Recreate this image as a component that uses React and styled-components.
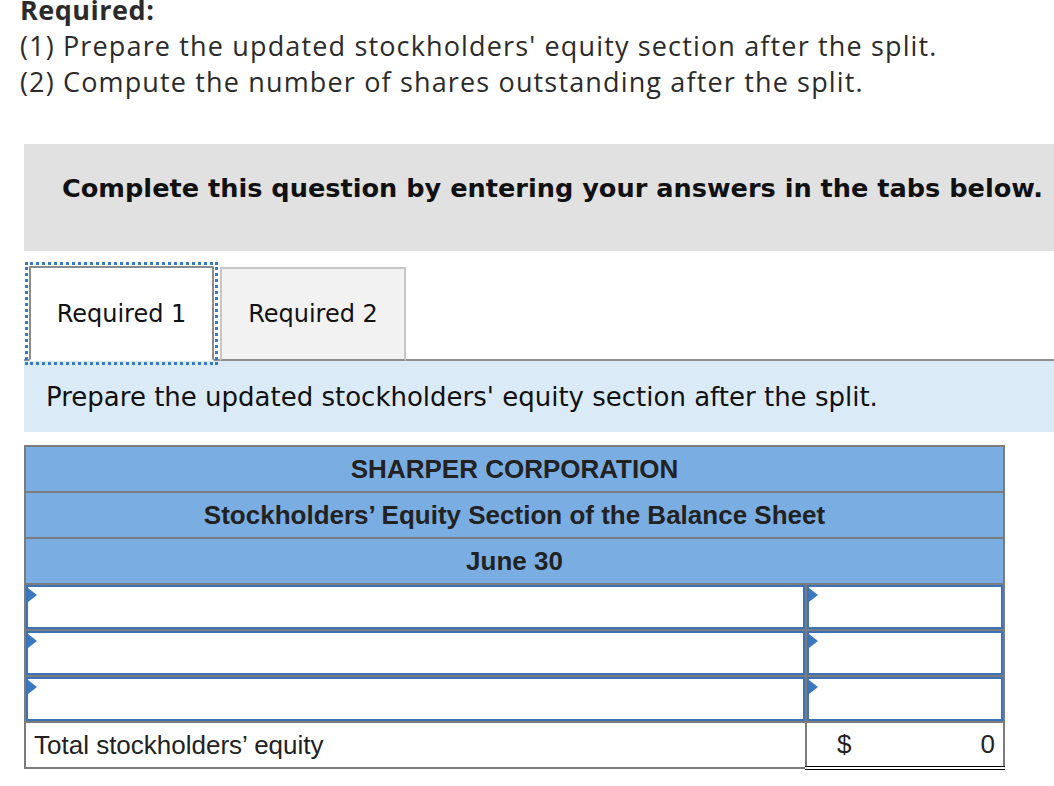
import styled, { createGlobalStyle } from 'styled-components';

const GlobalStyle = createGlobalStyle`
  html, body {
    margin: 0;
    padding: 0;
    background: #ffffff;
    overflow: hidden;
  }
`;

const Page = styled.div`
  width: 1054px;
  height: 786px;
  overflow: hidden;
  margin-top: -8px;
`;

const Intro = styled.div`
  padding-left: 20px;
  font-family: 'Open Sans', 'Lato', sans-serif;
  font-size: 27px;
  line-height: 36px;
  letter-spacing: 1.15px;
  color: #2b2b2b;
`;

const IntroTitle = styled.div`
  font-weight: 700;
  letter-spacing: 0.5px;
`;

const Widget = styled.div`
  margin: 44px 0 0 24px;
  width: 1040px;
`;

const Banner = styled.div`
  box-sizing: border-box;
  height: 107px;
  background: #e1e1e1;
  padding: 28px 0 0 38px;
  font-family: 'DejaVu Sans', Verdana, sans-serif;
  font-weight: 700;
  font-size: 25.6px;
  line-height: 32px;
  white-space: nowrap;
  color: #111;
`;

const TabBar = styled.div`
  display: flex;
  align-items: flex-end;
  margin-top: 15px;
  border-bottom: 2px solid #8f8f8f;
`;

const Tab = styled.div`
  display: flex;
  align-items: center;
  justify-content: center;
  box-sizing: border-box;
  height: ${(p) => (p.active ? '95px' : '94px')};
  width: ${(p) => (p.active ? '185px' : '186px')};
  margin-left: ${(p) => (p.active ? '5px' : '6px')};
  margin-bottom: -2px;
  background: ${(p) => (p.active ? '#ffffff' : '#f2f2f2')};
  border: 2px solid ${(p) => (p.active ? '#8c8c8c' : '#c6c6c6')};
  border-bottom: ${(p) => (p.active ? '2px solid #ffffff' : '2px solid #8f8f8f')};
  outline: ${(p) => (p.active ? '3px dotted #3b78c2' : 'none')};
  outline-offset: 1px;
  font-family: 'DejaVu Sans', Verdana, sans-serif;
  font-size: 24px;
  color: #111;
`;

const Instruction = styled.div`
  height: 71px;
  background: #dbeaf7;
  display: flex;
  align-items: center;
  padding-left: 22px;
  font-family: 'DejaVu Sans', Verdana, sans-serif;
  font-size: 26px;
  color: #111;
`;

const Sheet = styled.table`
  margin-top: 13px;
  width: 981px;
  border-collapse: collapse;
  font-family: 'Liberation Sans', Arial, sans-serif;
  color: #222;
`;

const HeadCell = styled.td`
  height: 44px;
  padding: 0;
  background: #7aaee2;
  border: 2px solid #7c7c7c;
  text-align: center;
  font-weight: 700;
  font-size: 26px;
`;

const InputCell = styled.td`
  position: relative;
  height: 44px;
  padding: 0;
  border: 2px solid #7c7c7c;
  width: ${(p) => p.width || 'auto'};
`;

const Field = styled.div`
  box-sizing: border-box;
  height: 44px;
  border: 2px solid #3b72b8;
  background: #fff;
`;

const Marker = styled.span`
  position: absolute;
  left: 2px;
  top: 3px;
  width: 0;
  height: 0;
  border-top: 7px solid transparent;
  border-bottom: 7px solid transparent;
  border-left: 9px solid #3b78c2;
`;

const TotalLabel = styled.td`
  height: 44px;
  padding: 0 0 0 8px;
  border: 2px solid #7c7c7c;
  font-size: 26px;
`;

const TotalValue = styled.td`
  height: 40px;
  padding: 0 8px 0 30px;
  border-left: 2px solid #7c7c7c;
  border-right: 2px solid #7c7c7c;
  border-top: 2px solid #000;
  border-bottom: 4px double #000;
  font-size: 26px;
`;

const Amount = styled.div`
  display: flex;
  justify-content: space-between;
`;

function InputRow() {
  return (
    <tr>
      <InputCell>
        <Field />
        <Marker />
      </InputCell>
      <InputCell width="196px">
        <Field />
        <Marker />
      </InputCell>
    </tr>
  );
}

export default function App() {
  return (
    <Page>
      <GlobalStyle />
      <Intro>
        <IntroTitle>Required:</IntroTitle>
        <div>(1) Prepare the updated stockholders' equity section after the split.</div>
        <div>(2) Compute the number of shares outstanding after the split.</div>
      </Intro>
      <Widget>
        <Banner>Complete this question by entering your answers in the tabs below.</Banner>
        <TabBar>
          <Tab active>Required 1</Tab>
          <Tab>Required 2</Tab>
        </TabBar>
        <Instruction>Prepare the updated stockholders' equity section after the split.</Instruction>
        <Sheet>
          <tbody>
            <tr>
              <HeadCell colSpan={2}>SHARPER CORPORATION</HeadCell>
            </tr>
            <tr>
              <HeadCell colSpan={2}>Stockholders’ Equity Section of the Balance Sheet</HeadCell>
            </tr>
            <tr>
              <HeadCell colSpan={2}>June 30</HeadCell>
            </tr>
            <InputRow />
            <InputRow />
            <InputRow />
            <tr>
              <TotalLabel>Total stockholders’ equity</TotalLabel>
              <TotalValue>
                <Amount>
                  <span>$</span>
                  <span>0</span>
                </Amount>
              </TotalValue>
            </tr>
          </tbody>
        </Sheet>
      </Widget>
    </Page>
  );
}
